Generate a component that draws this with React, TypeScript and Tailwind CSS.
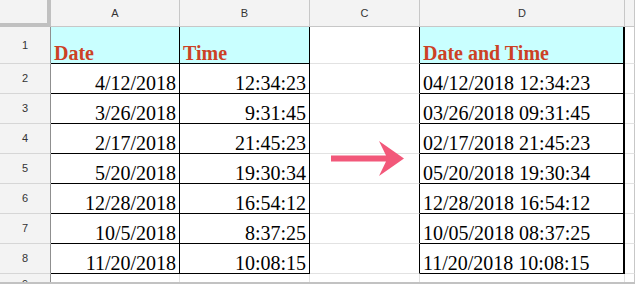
import React from "react";

const ROWS: [string, string, string][] = [
  ["4/12/2018", "12:34:23", "04/12/2018 12:34:23"],
  ["3/26/2018", "9:31:45", "03/26/2018 09:31:45"],
  ["2/17/2018", "21:45:23", "02/17/2018 21:45:23"],
  ["5/20/2018", "19:30:34", "05/20/2018 19:30:34"],
  ["12/28/2018", "16:54:12", "12/28/2018 16:54:12"],
  ["10/5/2018", "8:37:25", "10/05/2018 08:37:25"],
  ["11/20/2018", "10:08:15", "11/20/2018 10:08:15"],
];

const GRID = "grid grid-cols-[51px_129px_130px_110px_205px_10px]";
const serif = "font-['Liberation_Serif','Times_New_Roman',serif] text-[20px] leading-[20px]";
const sans = "font-['Liberation_Sans',Arial,sans-serif] text-[11px] text-[#333]";
const rowHead = `flex items-center justify-center bg-[#f3f3f3] border-r border-b border-r-[#8f8f8f] border-b-[#d6d6d6] ${sans}`;

export default function App() {
  return (
    <div className="relative w-[635px] h-[284px] overflow-hidden bg-white border-b-2 border-[#c2c2c2]">
      {/* column letters */}
      <div className={`${GRID} h-[27px]`}>
        <div className="bg-[#f3f3f3] border-r-4 border-b-4 border-[#c0c0c0]" />
        {["A", "B", "C", "D", ""].map((c, i) => (
          <div
            key={i}
            className={`flex items-center justify-center bg-[#f3f3f3] border-r border-b border-[#c7c7c7] ${sans}`}
          >
            {c}
          </div>
        ))}
      </div>

      {/* header row */}
      <div className={`${GRID} h-[37px]`}>
        <div className={rowHead}>1</div>
        <div className={`flex items-end pl-[3px] bg-[#c9ffff] border-r border-b border-black font-bold text-[#cc4125] ${serif}`}>
          Date
        </div>
        <div className={`flex items-end pl-[3px] bg-[#c9ffff] border-r border-b border-black font-bold text-[#cc4125] ${serif}`}>
          Time
        </div>
        <div className="border-r border-b border-r-black border-b-[#e2e2e2]" />
        <div className={`flex items-end pl-[3px] bg-[#c9ffff] border-r-2 border-b border-black font-bold text-[#cc4125] ${serif}`}>
          Date and Time
        </div>
        <div className="border-r border-b border-r-[#c7c7c7] border-b-[#e2e2e2]" />
      </div>

      {ROWS.map(([d, t, dt], i) => (
        <div key={i} className={`${GRID} h-[30px]`}>
          <div className={rowHead}>{i + 2}</div>
          <div className={`flex items-end justify-end pr-[3px] border-r border-b border-black text-black ${serif}`}>{d}</div>
          <div className={`flex items-end justify-end pr-[3px] border-r border-b border-black text-black ${serif}`}>{t}</div>
          <div className="border-r border-b border-r-black border-b-[#e2e2e2]" />
          <div className={`flex items-end pl-[3px] border-r-2 border-b border-black text-black ${serif}`}>{dt}</div>
          <div className="border-r border-b border-r-[#c7c7c7] border-b-[#e2e2e2]" />
        </div>
      ))}

      {/* row 9, clipped */}
      <div className={`${GRID} h-[21px]`}>
        <div className={rowHead}>9</div>
        <div className="border-r border-[#e2e2e2]" />
        <div className="border-r border-[#e2e2e2]" />
        <div className="border-r border-[#e2e2e2]" />
        <div className="border-r border-[#e2e2e2]" />
        <div className="border-r border-[#c7c7c7]" />
      </div>

      {/* arrow drawn over column C */}
      <svg className="absolute left-0 top-0 pointer-events-none" width="635" height="284" viewBox="0 0 635 284">
        <path
          d="M331 155.5 L386 155.5 L379 141 L404 158.5 L379 176 L386 161.5 L331 161.5 Z"
          fill="#f2587a"
        />
      </svg>
    </div>
  );
}
